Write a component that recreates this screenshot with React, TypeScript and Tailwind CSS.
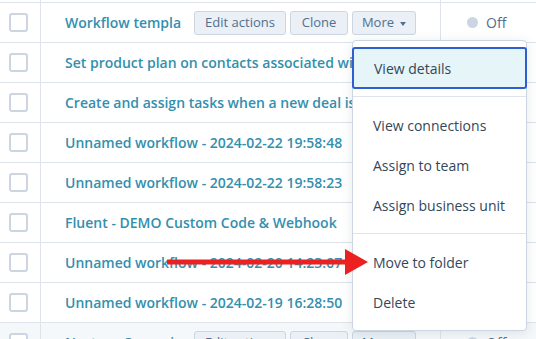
const rows = [
  { name: "Workflow template", actions: true },
  { name: "Set product plan on contacts associated with deals" },
  { name: "Create and assign tasks when a new deal is created" },
  { name: "Unnamed workflow - 2024-02-22 19:58:48" },
  { name: "Unnamed workflow - 2024-02-22 19:58:23" },
  { name: "Fluent - DEMO Custom Code & Webhook" },
  { name: "Unnamed workflow - 2024-02-20 14:23:07" },
  { name: "Unnamed workflow - 2024-02-19 16:28:50" },
  { name: "Nurture Campaign", actions: true, muted: true },
];

const Checkbox = () => (
  <div className="w-[19px] h-[19px] rounded-[3px] border-2 border-[#cbd6e2] bg-white" />
);

const Btn = ({ label, w, caret }: { label: string; w: string; caret?: boolean }) => (
  <div
    className={`${w} h-6 flex items-center justify-center gap-[6px] rounded-[3px] border border-[#cbd6e2] bg-[#eaf0f6] text-[13px] text-[#516f90]`}
  >
    {label}
    {caret && (
      <span className="w-0 h-0 border-l-[3.5px] border-r-[3.5px] border-t-[4px] border-l-transparent border-r-transparent border-t-[#516f90] translate-y-[1px]" />
    )}
  </div>
);

const Row = ({ name, actions, muted }: { name: string; actions?: boolean; muted?: boolean }) => (
  <div className={`flex h-10 border-b border-[#dfe3eb] ${muted ? "bg-[#f5f8fa]" : "bg-white"}`}>
    <div className="w-[41px] shrink-0 border-r border-[#dfe3eb] flex items-center pl-[9px]">
      <Checkbox />
    </div>
    <div className="w-[400px] shrink-0 border-r border-[#dfe3eb] flex items-center pl-[24px] overflow-hidden">
      <div
        className={`${actions ? "w-[116px]" : ""} shrink-0 overflow-hidden whitespace-nowrap text-[14px] font-semibold text-[#338fae]`}
      >
        {name}
      </div>
      {actions && (
        <div className="flex items-center gap-1 ml-[13px]">
          <Btn label="Edit actions" w="w-[92px]" />
          <Btn label="Clone" w="w-[58px]" />
          <Btn label="More" w="w-[64px]" caret />
        </div>
      )}
    </div>
    <div className="flex-1 flex items-center pl-[26px] gap-2">
      <div className="w-[11px] h-[11px] rounded-full bg-[#cbd6e2]" />
      <span className="text-[14px] text-[#516f90]">Off</span>
    </div>
  </div>
);

const Item = ({ label }: { label: string }) => (
  <div className="h-10 flex items-center px-[20px] text-[14px] text-[#33475b]">{label}</div>
);

export default function App() {
  return (
    <div
      className="relative w-[536px] h-[339px] overflow-hidden bg-white"
      style={{ fontFamily: '"Open Sans", "Noto Sans", sans-serif' }}
    >
      <div className="flex h-[3px] border-b border-[#dfe3eb]">
        <div className="w-[41px] border-r border-[#dfe3eb]" />
        <div className="w-[400px] border-r border-[#dfe3eb]" />
      </div>
      {rows.map((r, i) => (
        <Row key={i} {...r} />
      ))}

      {/* More dropdown */}
      <div className="absolute left-[352px] top-[40px] w-[175px] rounded-[4px] border border-[#cbd6e2] bg-white pt-[6px] pb-2 shadow-[0_2px_12px_rgba(45,62,80,0.12)]">
        <div className="-mx-px h-[42px] flex items-center px-[20px] rounded-[3px] border-2 border-[#2d5fd0] bg-[#e5f5f8] text-[14px] text-[#33475b]">
          View details
        </div>
        <div className="mt-[7px] mb-2 h-px bg-[#dfe3eb]" />
        <Item label="View connections" />
        <Item label="Assign to team" />
        <Item label="Assign business unit" />
        <div className="my-2 h-px bg-[#dfe3eb]" />
        <Item label="Move to folder" />
        <Item label="Delete" />
      </div>

      {/* annotation arrow */}
      <svg className="absolute left-[165px] top-[246px]" width="206" height="32" viewBox="0 0 206 32">
        <line x1="2" y1="16" x2="182" y2="16" stroke="#ec2020" strokeWidth="5" />
        <polygon points="180,3 203,16 180,29" fill="#ec2020" />
      </svg>
    </div>
  );
}
